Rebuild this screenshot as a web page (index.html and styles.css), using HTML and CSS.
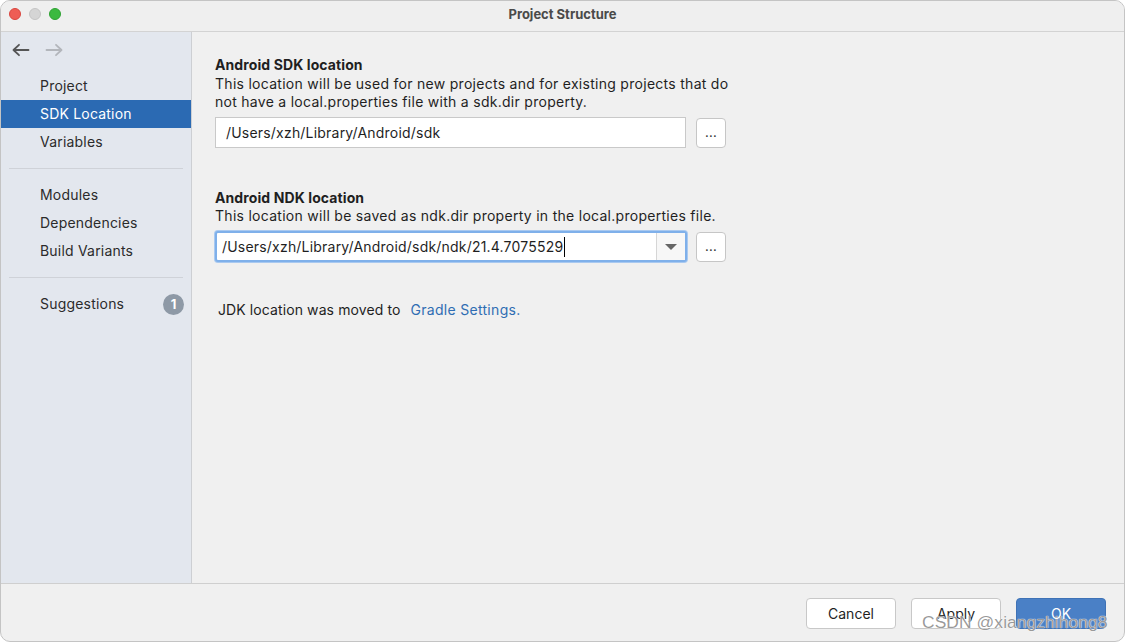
FILE: index.html
```html
<!DOCTYPE html>
<html>
<head>
<meta charset="utf-8">
<link rel="stylesheet" href="styles.css">
</head>
<body>
<div class="window">
  <div class="titlebar">
    <div class="lights">
      <span class="light red"></span>
      <span class="light gray"></span>
      <span class="light green"></span>
    </div>
    <div class="title">Project Structure</div>
  </div>
  <div class="body">
    <aside class="sidebar">
      <div class="nav-arrows">
        <svg class="arrow" width="18" height="14" viewBox="0 0 18 14"><path d="M1.5 7H16.5M1.5 7L7 1.8M1.5 7L7 12.2" fill="none" stroke="#555" stroke-width="1.8" stroke-linecap="round" stroke-linejoin="round"/></svg>
        <svg class="arrow" width="18" height="14" viewBox="0 0 18 14"><path d="M16.5 7H1.5M16.5 7L11 1.8M16.5 7L11 12.2" fill="none" stroke="#b3b6bb" stroke-width="1.8" stroke-linecap="round" stroke-linejoin="round"/></svg>
      </div>
      <div class="group">
        <div class="item">Project</div>
        <div class="item selected">SDK Location</div>
        <div class="item">Variables</div>
      </div>
      <div class="sep"></div>
      <div class="group">
        <div class="item">Modules</div>
        <div class="item">Dependencies</div>
        <div class="item">Build Variants</div>
      </div>
      <div class="sep"></div>
      <div class="group">
        <div class="item with-badge">Suggestions<span class="badge">1</span></div>
      </div>
    </aside>
    <main class="content">
      <section class="field">
        <div class="label">Android SDK location</div>
        <div class="desc">This location will be used for new projects and for existing projects that do<br>not have a local.properties file with a sdk.dir property.</div>
        <div class="row">
          <div class="input">/Users/xzh/Library/Android/sdk</div>
          <div class="browse">...</div>
        </div>
      </section>
      <section class="field ndk">
        <div class="label">Android NDK location</div>
        <div class="desc">This location will be saved as ndk.dir property in the local.properties file.</div>
        <div class="row">
          <div class="combo">
            <div class="combo-text">/Users/xzh/Library/Android/sdk/ndk/21.4.7075529<span class="caret"></span></div>
            <div class="combo-arrow"><span class="tri"></span></div>
          </div>
          <div class="browse">...</div>
        </div>
      </section>
      <div class="jdk">JDK location was moved to <span class="link">Gradle Settings.</span></div>
    </main>
  </div>
  <footer class="footer">
    <div class="btn">Cancel</div>
    <div class="btn">Apply</div>
    <div class="btn primary">OK</div>
    <div class="watermark">CSDN @xiangzhihong8</div>
  </footer>
</div>
</body>
</html>
```
FILE: styles.css
```css
html, body {
  margin: 0;
  padding: 0;
  background: #ffffff;
}
body {
  font-family: Inter, "Noto Sans", "Liberation Sans", sans-serif;
  font-size: 14px;
  color: #1f1f1f;
  letter-spacing: 0.2px;
}
.window {
  width: 1125px;
  height: 642px;
  box-sizing: border-box;
  border: 1px solid #c4c4c4;
  border-radius: 10px;
  overflow: hidden;
  background: #f0f0f0;
  display: flex;
  flex-direction: column;
  position: relative;
}
.titlebar {
  flex: none;
  border-bottom: 1px solid #d3d3d3;
  background: #efefef;
  display: flex;
  align-items: center;
  position: relative;
  padding-bottom: 5px;
  box-sizing: border-box;
  height: 31px;
}
.lights {
  display: flex;
  gap: 8px;
  padding-left: 8px;
}
.light {
  width: 12px;
  height: 12px;
  border-radius: 50%;
  box-sizing: border-box;
}
.light.red { background: #ee5d55; border: 0.5px solid #d9463f; }
.light.gray { background: #d5d5d5; border: 0.5px solid #c4c4c4; }
.light.green { background: #3bb93f; border: 0.5px solid #2ea232; }
.title {
  position: absolute;
  left: 0;
  right: 0;
  top: 5px;
  text-align: center;
  font-weight: 700;
  font-size: 13px;
  letter-spacing: 0;
  color: #4a4a4a;
  pointer-events: none;
}
.body {
  flex: 1;
  display: flex;
  min-height: 0;
  border-bottom: 1px solid #cfcfcf;
}
.sidebar {
  width: 190px;
  flex: none;
  background: #e3e7ee;
  border-right: 1px solid #cdcfd3;
  padding-top: 10px;
}
.nav-arrows {
  display: flex;
  gap: 15px;
  padding-left: 11px;
  height: 16px;
  align-items: center;
  margin-bottom: 14px;
}
.arrow { display: block; }
.item {
  height: 28px;
  line-height: 28px;
  padding-left: 39px;
  color: #2b2b2b;
  position: relative;
}
.item.selected {
  background: #2b6ab3;
  color: #ffffff;
}
.sep {
  height: 1px;
  background: #cfd2d8;
  margin: 12px 8px 12px 8px;
}
.badge {
  position: absolute;
  left: 162px;
  top: 4px;
  width: 21px;
  height: 21px;
  border-radius: 50%;
  background: #8e99a6;
  color: #ffffff;
  font-weight: 700;
  font-size: 13px;
  letter-spacing: 0;
  line-height: 21px;
  text-align: center;
}
.content {
  flex: 1;
  padding: 23px 0 0 23px;
}
.field .label {
  font-weight: 700;
  line-height: 20px;
  letter-spacing: 0.1px;
}
.field .desc {
  line-height: 18px;
  color: #1f1f1f;
  letter-spacing: 0.28px;
}
.row {
  display: flex;
  align-items: center;
  gap: 10px;
  margin-top: 6px;
}
.input {
  width: 471px;
  height: 31px;
  box-sizing: border-box;
  background: #ffffff;
  border: 1px solid #c9c9c9;
  padding-left: 10px;
  line-height: 29px;
}
.browse {
  width: 30px;
  height: 30px;
  box-sizing: border-box;
  background: #ffffff;
  border: 1px solid #c6c6c6;
  border-radius: 4px;
  text-align: center;
  line-height: 26px;
  font-size: 13px;
  color: #333;
}
.ndk {
  margin-top: 41px;
}
.ndk .label { line-height: 18px; }
.ndk .row {
  margin-top: 6px;
  gap: 9px;
}
.combo {
  width: 472px;
  height: 31px;
  box-sizing: border-box;
  border: 2px solid #7fb0ea;
  border-radius: 3px;
  background: #ffffff;
  display: flex;
  box-shadow: 0 0 0 1px #a9c9f0;
}
.combo-text {
  flex: 1;
  padding-left: 5px;
  line-height: 27px;
}
.caret {
  display: inline-block;
  width: 1px;
  height: 20px;
  background: #000;
  vertical-align: -5px;
  margin-left: 1px;
}
.combo-arrow {
  width: 28px;
  border-left: 1px solid #d6d6d6;
  background: #f7f7f7;
  display: flex;
  align-items: center;
  justify-content: center;
}
.tri {
  width: 0;
  height: 0;
  border-left: 6px solid transparent;
  border-right: 6px solid transparent;
  border-top: 6px solid #666;
}
.jdk {
  margin-top: 39px;
  padding-left: 3px;
  color: #1f1f1f;
  letter-spacing: 0.1px;
}
.link {
  color: #2f6db3;
  margin-left: 6px;
  letter-spacing: 0.3px;
}
.footer {
  height: 57px;
  flex: none;
  display: flex;
  justify-content: flex-end;
  align-items: flex-start;
  gap: 15px;
  padding: 14px 18px 0 0;
  box-sizing: border-box;
  position: relative;
}
.btn {
  width: 90px;
  height: 31px;
  box-sizing: border-box;
  background: #ffffff;
  border: 1px solid #c8c8c8;
  border-radius: 4px;
  text-align: center;
  line-height: 29px;
  color: #1f1f1f;
  letter-spacing: 0;
}
.btn.primary {
  background: #4a80c6;
  border-color: #3f72b6;
  color: #ffffff;
}
.watermark {
  position: absolute;
  left: 921px;
  top: 28px;
  font-family: "Liberation Sans", Arial, sans-serif;
  font-size: 17.4px;
  color: rgba(120, 120, 120, 0.75);
  text-shadow: 0 0 1px #ffffff, 0 0 1px #ffffff;
  letter-spacing: 0.1px;
  white-space: nowrap;
}
```
